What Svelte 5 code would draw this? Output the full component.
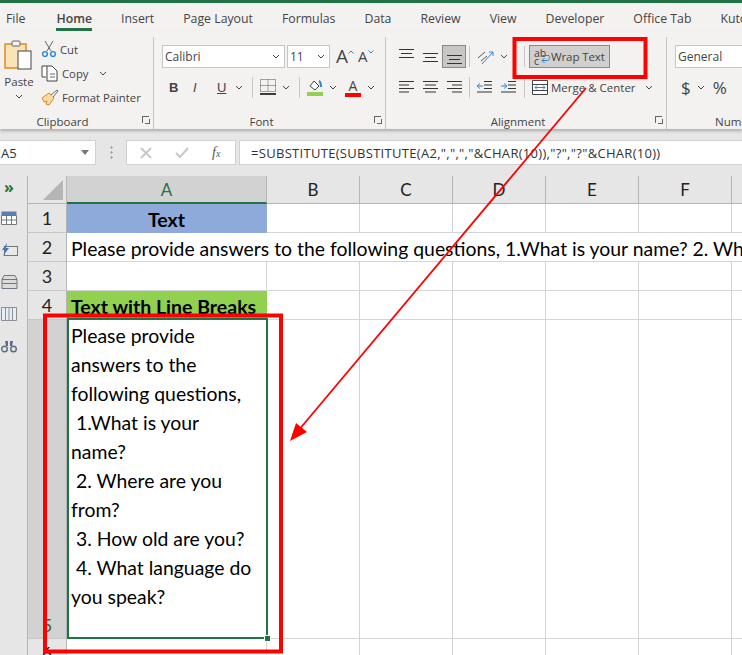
<script>
  const tabs = ['File', 'Home', 'Insert', 'Page Layout', 'Formulas', 'Data', 'Review', 'View', 'Developer', 'Office Tab', 'Kutools'];
  const columns = ['B', 'C', 'D', 'E', 'F', 'G'];
  const wrapped = [
    'Please provide', 'answers to the', 'following questions,', ' 1.What is your', 'name?',
    ' 2. Where are you', 'from?', ' 3. How old are you?', ' 4. What language do', 'you speak?'
  ];
</script>

<div class="excel">
  <div class="tabs">
    {#each tabs as tab}
      <span class="tab" class:current={tab === 'Home'}>{tab}</span>
    {/each}
  </div>

  <div class="ribbon">
    <section class="group clipboard">
      <div class="body clip-body">
        <div class="paste">
          <svg width="30" height="32" viewBox="0 0 30 32">
            <rect x="1" y="4" width="21" height="24" fill="#fbe3b8" stroke="#e08a1e" stroke-width="1.5"/>
            <rect x="8" y="1" width="8" height="5" rx="1" fill="#f3f2f1" stroke="#666"/>
            <rect x="14" y="11" width="13" height="18" fill="#fff" stroke="#444"/>
          </svg>
          <span>Paste</span>
          <svg class="chev" width="8" height="5" viewBox="0 0 8 5"><path d="M1 1l3 3 3-3" fill="none" stroke="#444"/></svg>
        </div>
        <div class="clip-list">
          <div class="clip-item">
            <svg width="16" height="18" viewBox="0 0 16 18"><path d="M4 1l6 10M12 1L6 11" fill="none" stroke="#666"/><circle cx="4" cy="14" r="2.4" fill="none" stroke="#2b88d8" stroke-width="1.4"/><circle cx="12" cy="14" r="2.4" fill="none" stroke="#2b88d8" stroke-width="1.4"/></svg>
            <span>Cut</span>
          </div>
          <div class="clip-item">
            <svg width="18" height="18" viewBox="0 0 18 18"><path d="M6 2H1v11h4M6 2h5l5 5v10H6z" fill="#fff" stroke="#444"/><path d="M9 10h5M9 13h5" stroke="#666"/></svg>
            <span>Copy</span>
            <svg class="copy-chev" width="8" height="5" viewBox="0 0 8 5"><path d="M1 1l3 3 3-3" fill="none" stroke="#444"/></svg>
          </div>
          <div class="clip-item">
            <svg width="18" height="18" viewBox="0 0 18 18"><path d="M1 10l7-5 5 5-5 7-3-1 1-3-3 1z" fill="#fbd9a5" stroke="#e08a1e"/><path d="M10 7l6-5 1 1-5 6" fill="#fff" stroke="#666"/></svg>
            <span>Format Painter</span>
          </div>
        </div>
      </div>
      <div class="label clip-label"><span>Clipboard</span><i class="launcher"></i></div>
    </section>

    <section class="group font">
      <div class="body font-body">
        <div class="row">
          <div class="combo font-name"><span>Calibri</span><svg width="8" height="5" viewBox="0 0 8 5"><path d="M1 1l3 3 3-3" fill="none" stroke="#444"/></svg></div>
          <div class="combo font-size"><span>11</span><svg width="8" height="5" viewBox="0 0 8 5"><path d="M1 1l3 3 3-3" fill="none" stroke="#444"/></svg></div>
          <span class="grow-a">A</span>
          <svg class="size-chev" width="6" height="4" viewBox="0 0 6 4"><path d="M.5 3.500L3 1l2.500 2.500" fill="none" stroke="#2b88d8"/></svg>
          <span class="shrink-a">A</span>
          <svg class="size-chev" width="6" height="4" viewBox="0 0 6 4"><path d="M.5.5L3 3 5.500.5" fill="none" stroke="#2b88d8"/></svg>
        </div>
        <div class="row format-row">
          <b class="fmt">B</b>
          <i class="fmt italic">I</i>
          <span class="fmt under">U</span>
          <svg class="chev-s" width="8" height="5" viewBox="0 0 8 5"><path d="M1 1l3 3 3-3" fill="none" stroke="#444"/></svg>
          <i class="vsep"></i>
          <svg width="16" height="16" viewBox="0 0 16 16"><path d="M.5.5h15v12H.5zM8 .5v12M.5 6.5h15" fill="none" stroke="#555" stroke-dasharray="1 1"/><path d="M0 15h16" stroke="#000" stroke-width="1.5"/></svg>
          <svg class="chev-s" width="8" height="5" viewBox="0 0 8 5"><path d="M1 1l3 3 3-3" fill="none" stroke="#444"/></svg>
          <i class="vsep"></i>
          <svg width="16" height="17" viewBox="0 0 16 17"><path d="M3 7l4-5 5 5-4 4z" fill="#fff" stroke="#444"/><path d="M12 2c2 1 2 3 2 6" fill="none" stroke="#2b88d8" stroke-width="2"/><rect y="13" width="16" height="4" fill="#92d050"/></svg>
          <svg class="chev-s" width="8" height="5" viewBox="0 0 8 5"><path d="M1 1l3 3 3-3" fill="none" stroke="#444"/></svg>
          <span class="font-colour">A</span>
          <svg class="chev-s" width="8" height="5" viewBox="0 0 8 5"><path d="M1 1l3 3 3-3" fill="none" stroke="#444"/></svg>
        </div>
      </div>
      <div class="label"><span>Font</span><i class="launcher"></i></div>
    </section>

    <section class="group alignment">
      <div class="body align-body">
        <div class="row align-row">
          <span class="al top"><svg width="15" height="10" viewBox="0 0 15 10"><path d="M0 1.500h15M2 5.500h11M0 9.500h15" stroke="#333"/></svg></span>
          <span class="al"><svg width="15" height="10" viewBox="0 0 15 10"><path d="M0 1.500h15M2 5.500h11M0 9.500h15" stroke="#333"/></svg></span>
          <span class="al bottom selected"><svg width="15" height="10" viewBox="0 0 15 10"><path d="M0 1.500h15M2 5.500h11M0 9.500h15" stroke="#333"/></svg></span>
          <i class="vsep first"></i>
          <svg class="orient" width="17" height="16" viewBox="0 0 17 16"><path d="M1 9l7-6M4 12l6-5" stroke="#555"/><path d="M5 15L16 3M12 3h4v4" fill="none" stroke="#2b88d8"/></svg>
          <svg class="chev-s" width="8" height="5" viewBox="0 0 8 5"><path d="M1 1l3 3 3-3" fill="none" stroke="#444"/></svg>
          <i class="vsep wide"></i>
          <div class="wrap-btn">
            <span class="abc">ab<br />c</span>
            <svg width="11" height="10" viewBox="0 0 11 10"><path d="M1 1.500h8c2 3 0 5-2 5H2M4.500 4L2 6.500 4.500 9" fill="none" stroke="#2b88d8"/></svg>
            <span class="wrap-text">Wrap Text</span>
          </div>
        </div>
        <div class="row align-row second">
          <span class="al"><svg width="15" height="12" viewBox="0 0 15 12"><path d="M0 .5h15M0 4h10M0 7.5h15M0 11h10" stroke="#333"/></svg></span>
          <span class="al"><svg width="15" height="12" viewBox="0 0 15 12"><path d="M0 .5h15M2 4h11M0 7.5h15M2 11h11" stroke="#333"/></svg></span>
          <span class="al"><svg width="15" height="12" viewBox="0 0 15 12"><path d="M0 .5h15M5 4h10M0 7.5h15M5 11h10" stroke="#333"/></svg></span>
          <i class="vsep first"></i>
          <span class="al"><svg width="15" height="12" viewBox="0 0 15 12"><path d="M7 .5h8M7 4h8M7 7.5h8M0 11h15" stroke="#333"/><path d="M6 5H0M3 2.500L0 5l3 2.500" fill="none" stroke="#2b88d8"/></svg></span>
          <span class="al"><svg width="15" height="12" viewBox="0 0 15 12"><path d="M7 .5h8M7 4h8M7 7.5h8M0 11h15" stroke="#333"/><path d="M0 5h6M3 2.500L6 5 3 7.500" fill="none" stroke="#2b88d8"/></svg></span>
          <i class="vsep wide2"></i>
          <div class="merge">
            <svg width="16" height="15" viewBox="0 0 16 15"><path d="M.5.5h15v14H.5zM.5 4.500h15M.5 10.500h15" fill="#fff" stroke="#444"/><path d="M3 7.500h10M5 5.500l-2 2 2 2M11 5.500l2 2-2 2" fill="none" stroke="#2b88d8"/></svg>
            <span>Merge &amp; Center</span>
            <svg width="8" height="5" viewBox="0 0 8 5"><path d="M1 1l3 3 3-3" fill="none" stroke="#444"/></svg>
          </div>
        </div>
      </div>
      <div class="label"><span>Alignment</span><i class="launcher"></i></div>
    </section>

    <section class="group number">
      <div class="body number-body">
        <div class="combo general"><span>General</span></div>
        <div class="row money">
          <span class="dollar">$</span>
          <svg class="chev-s" width="8" height="5" viewBox="0 0 8 5"><path d="M1 1l3 3 3-3" fill="none" stroke="#444"/></svg>
          <span class="pct">%</span>
        </div>
      </div>
      <div class="label num-label"><span>Number</span></div>
    </section>
  </div>

  <div class="formula-bar">
    <div class="name-box"><span>A5</span><i class="caret"></i></div>
    <span class="dots"></span>
    <div class="fx-box">
      <svg width="12" height="12" viewBox="0 0 12 12"><path d="M1 1l10 10M11 1L1 11" stroke="#c8c8c8" stroke-width="2"/></svg>
      <svg width="14" height="12" viewBox="0 0 14 12"><path d="M1 6l4 4 8-9" fill="none" stroke="#c8c8c8" stroke-width="2"/></svg>
      <em>f<small>x</small></em>
    </div>
    <div class="formula">=SUBSTITUTE(SUBSTITUTE(A2,",",","&amp;CHAR(10)),"?","?"&amp;CHAR(10))</div>
  </div>

  <div class="sheet">
    <aside class="side">
      <span class="expand">»</span>
      <svg width="16" height="14" viewBox="0 0 16 14"><rect x=".5" y=".5" width="15" height="4" fill="#5b7fb5"/><path d="M.5 4.500h15v9H.500zM5.500 4.500v9M10.500 4.500v9M.5 9h15" fill="#fff" stroke="#777"/></svg>
      <svg width="17" height="14" viewBox="0 0 17 14"><rect x="3.500" y="3.500" width="13" height="9" fill="#e8e8e8" stroke="#777"/><path d="M6 0L1 7h3l-2 6 6-8H5z" fill="#3b78c2"/></svg>
      <svg width="17" height="14" viewBox="0 0 17 14"><path d="M3 .5h11l2 4H1zM1 4.500h15v4H1zM1 8.500h15v5H1z" fill="#dcdcdc" stroke="#6f7782"/></svg>
      <svg width="16" height="14" viewBox="0 0 16 14"><path d="M.5.5h15v13H.500zM4.500.5v13M8 .5v13M11.500.5v13" fill="#e8eef5" stroke="#8a8f96"/></svg>
      <svg width="16" height="14" viewBox="0 0 16 14"><circle cx="3.500" cy="10" r="2.800" fill="none" stroke="#5a6b85" stroke-width="1.400"/><circle cx="12.500" cy="10" r="2.800" fill="none" stroke="#5a6b85" stroke-width="1.400"/><path d="M4 2h3v5H5zM12 2H9v5h2z" fill="#5a6b85"/></svg>
    </aside>

    <div class="grid">
      <div class="corner"><i></i></div>
      <div class="col-head current">A</div>
      {#each columns as col}
        <div class="col-head">{col}</div>
      {/each}

      <div class="row-head">1</div>
      <div class="cell title">Text</div>
      {#each columns as col}<div class="cell"></div>{/each}

      <div class="row-head">2</div>
      <div class="cell long">Please provide answers to the following questions, 1.What is your name? 2. Where are you from?</div>

      <div class="row-head">3</div>
      <div class="cell"></div>
      {#each columns as col}<div class="cell"></div>{/each}

      <div class="row-head">4</div>
      <div class="cell breaks">Text with Line Breaks</div>
      {#each columns as col}<div class="cell"></div>{/each}

      <div class="row-head current five">5</div>
      <div class="cell selected-cell">
        {#each wrapped as line}
          <div class="line">{line}</div>
        {/each}
        <i class="handle"></i>
      </div>
      {#each columns as col}<div class="cell"></div>{/each}

      <div class="row-head">6</div>
      <div class="cell"></div>
      {#each columns as col}<div class="cell"></div>{/each}
    </div>
  </div>

  <svg class="marks" width="742" height="655" viewBox="0 0 742 655">
    <rect x="514.500" y="39" width="131" height="38" fill="none" stroke="#fe0000" stroke-width="4"/>
    <rect x="45" y="315.500" width="236" height="336" fill="none" stroke="#fe0000" stroke-width="4"/>
    <path d="M586 88L298 431" stroke="#fe0000" stroke-width="1.800"/>
    <path d="M290 441l6-18 11 9z" fill="#fe0000"/>
  </svg>
</div>

<style>
  :global(body) {
    margin: 0;
    background: #e6e6e6;
  }

  .excel {
    position: relative;
    width: 742px;
    height: 655px;
    overflow: hidden;
    font-family: "Open Sans", "Noto Sans", sans-serif;
    color: #444;
    background: #e6e6e6;
  }

  /* tabs */
  .tabs {
    display: flex;
    height: 28px;
    gap: 29px;
    padding-left: 6px;
    border-top: 3px solid #217346;
    background: #f3f2f1;
    font-size: 12.300px;
    line-height: 31px;
    white-space: nowrap;
  }

  .tab {
    height: 28px;
    color: #444;
  }

  .tab:first-child {
    margin-right: 2px;
  }

  .tab.current {
    font-weight: 600;
    box-shadow: inset 0 -3px #217346;
  }

  /* ribbon */
  .ribbon {
    display: flex;
    height: 98px;
    background: #f3f2f1;
    box-shadow: 0 2px 3px rgba(0, 0, 0, 0.25);
    position: relative;
    font-size: 12px;
    white-space: nowrap;
  }

  .group {
    display: flex;
    flex-direction: column;
    flex: none;
    border-right: 1px solid #c8c6c4;
    margin: 6px 0 0;
  }

  .body {
    flex: 1;
  }

  .label {
    display: flex;
    justify-content: center;
    position: relative;
    height: 20px;
    padding-right: 16px;
    line-height: 25px;
    font-size: 11.500px;
  }

  .clip-label {
    padding-right: 28px;
  }

  .launcher {
    position: absolute;
    right: 4px;
    top: 7px;
    width: 6px;
    height: 6px;
    border-left: 1px solid #666;
    border-top: 1px solid #666;
    box-shadow: 2px 2px 0 -1px #666;
  }

  .row {
    display: flex;
    align-items: center;
  }

  .clipboard {
    width: 153px;
  }

  .clip-body {
    display: flex;
    padding: 3px 0 0 5px;
  }

  .paste {
    display: flex;
    flex-direction: column;
    align-items: center;
    width: 28px;
    font-size: 11.500px;
  }

  .paste span {
    margin-top: 1px;
    line-height: 17px;
  }

  .chev {
    margin-top: 4px;
  }

  .clip-list {
    margin-left: 8px;
    display: flex;
    flex-direction: column;
    gap: 6px;
    font-size: 11.300px;
  }

  .clip-item {
    display: flex;
    align-items: center;
    gap: 3px;
    height: 18px;
  }

  .copy-chev {
    margin-left: 8px;
  }

  .font {
    width: 231px;
  }

  .font-body {
    padding: 8px 0 0 8px;
  }

  .combo {
    display: flex;
    align-items: center;
    justify-content: space-between;
    box-sizing: border-box;
    height: 23px;
    padding: 0 4px 0 2px;
    background: #fff;
    border: 1px solid #c8c6c4;
  }

  .font-name {
    width: 123px;
  }

  .font-size {
    width: 43px;
    margin-left: 2px;
  }

  .grow-a, .shrink-a {
    color: #444;
    line-height: 1;
    margin-left: 6px;
  }

  .grow-a {
    font-size: 19px;
  }

  .shrink-a {
    font-size: 15px;
    margin-left: 4px;
  }

  .size-chev {
    align-self: flex-start;
    margin-top: 5px;
    flex: none;
  }

  .format-row {
    margin-top: 7px;
    padding-left: 7px;
    height: 24px;
  }

  .fmt {
    width: 24px;
    font-size: 13px;
    font-family: "Liberation Sans", sans-serif;
  }

  .under {
    text-decoration: underline;
    width: 12px;
  }

  .chev-s {
    margin-left: 6px;
    flex: none;
  }

  .vsep {
    display: block;
    width: 1px;
    height: 21px;
    margin: 0 7px 0 9px;
    background: #c8c6c4;
    flex: none;
  }

  .vsep.first {
    margin: 0 2px 0 3px;
  }

  .font-colour {
    font-size: 14px;
    width: 16px;
    margin-left: 8px;
    text-align: center;
    line-height: 15px;
    border-bottom: 4px solid #f00;
  }

  .alignment {
    width: 280px;
  }

  .align-body {
    padding: 8px 0 0 8px;
  }

  .align-row {
    height: 23px;
  }

  .align-row.second {
    margin-top: 7px;
    height: 24px;
  }

  .al {
    display: flex;
    align-items: center;
    justify-content: center;
    box-sizing: border-box;
    width: 24px;
    height: 23px;
    flex: none;
  }

  .al.top svg {
    margin-bottom: 7px;
  }

  .al.bottom svg {
    margin-top: 5px;
  }

  .al.selected {
    background: #c8c6c4;
    border: 1px solid #8a8886;
  }

  .orient {
    margin-left: 5px;
    flex: none;
  }

  .vsep.wide {
    margin: 0 4px 0 16px;
  }

  .vsep.wide2 {
    margin: 0 7px 0 4px;
  }

  .wrap-btn {
    display: flex;
    align-items: center;
    box-sizing: border-box;
    width: 81px;
    height: 23px;
    padding-left: 4px;
    background: #d2d0ce;
    border: 1px solid #8a8886;
    font-size: 11.500px;
  }

  .abc {
    font-size: 10.500px;
    line-height: 8px;
    width: 13px;
  }

  .wrap-btn svg {
    margin: 4px 0 0 -7px;
  }

  .wrap-text {
    letter-spacing: -0.100px;
  }

  .merge {
    display: flex;
    align-items: center;
    gap: 3px;
    font-size: 11.500px;
  }

  .merge svg:last-child {
    margin-left: 6px;
  }

  .number {
    flex: 1;
    border-right: 0;
  }

  .number-body {
    padding: 8px 0 0 8px;
  }

  .general {
    width: 100px;
  }

  .money {
    margin-top: 7px;
    height: 24px;
    padding-left: 6px;
    gap: 0;
  }

  .dollar, .pct {
    font-size: 17px;
    font-family: "Open Sans", sans-serif;
  }

  .pct {
    margin-left: 8px;
  }

  .num-label {
    justify-content: flex-start;
    padding-left: 48px;
  }

  /* formula bar */
  .formula-bar {
    display: flex;
    align-items: stretch;
    height: 25px;
    padding: 11px 0 11px;
    font-size: 13px;
  }

  .name-box, .fx-box, .formula {
    box-sizing: border-box;
    background: #fff;
    border: 1px solid #d0d0d0;
    display: flex;
    align-items: center;
  }

  .name-box {
    width: 96px;
    justify-content: space-between;
    padding: 0 6px 0 1px;
    color: #333;
    border-left: 0;
  }

  .caret {
    border: 4px solid transparent;
    border-top: 5px solid #777;
    border-bottom: 0;
  }

  .dots {
    width: 30px;
    background: radial-gradient(circle, #aaa 1px, transparent 1.300px) center / 3px 5px repeat-y;
    margin: 4px 0;
  }

  .fx-box {
    width: 110px;
    gap: 23px;
    padding-left: 13px;
  }

  .fx-box em {
    font-family: "Liberation Serif", serif;
    font-size: 14px;
    color: #555;
  }

  .fx-box small {
    font-size: 10px;
  }

  .formula {
    flex: 1;
    margin-left: 3px;
    padding-left: 11px;
    border-right: 0;
    color: #333;
    white-space: nowrap;
    letter-spacing: 0.300px;
  }

  /* sheet */
  .sheet {
    display: flex;
    height: 479px;
  }

  .side {
    box-sizing: border-box;
    width: 28px;
    flex: none;
    display: flex;
    flex-direction: column;
    align-items: center;
    gap: 18px;
    padding: 4px 9px 0 0;
    border-right: 1px solid #b5b5b5;
  }

  .expand {
    color: #217346;
    font-size: 16px;
    font-weight: 700;
    line-height: 14px;
    height: 14px;
    margin-bottom: -1px;
  }

  .grid {
    display: grid;
    grid-template-columns: 39px 200px repeat(5, 93px) 50px;
    grid-template-rows: 28px 29px 29px 29px 29px 319px 29px;
    flex: none;
    background: #fff;
    font-family: Lato, "Open Sans", sans-serif;
    color: #000;
  }

  .corner {
    background: #e6e6e6;
    border-right: 1px solid #b5b5b5;
    border-bottom: 1px solid #b5b5b5;
    position: relative;
  }

  .corner i {
    position: absolute;
    right: 3px;
    bottom: 3px;
    width: 0;
    height: 0;
    border-left: 20px solid transparent;
    border-bottom: 20px solid #b5b5b5;
  }

  .col-head {
    display: flex;
    align-items: center;
    justify-content: center;
    box-sizing: border-box;
    background: #e6e6e6;
    border-right: 1px solid #b5b5b5;
    border-bottom: 1px solid #b5b5b5;
    font-size: 17px;
    color: #222;
  }

  .col-head.current {
    background: #d2d2d2;
    color: #217346;
    border-bottom: 2px solid #217346;
  }

  .row-head {
    display: flex;
    align-items: center;
    justify-content: center;
    box-sizing: border-box;
    background: #e6e6e6;
    border-right: 1px solid #b5b5b5;
    border-bottom: 1px solid #c8c8c8;
    font-size: 18px;
    color: #222;
  }

  .row-head.current {
    background: #d2d2d2;
    color: #217346;
  }

  .five {
    align-items: flex-end;
    padding-bottom: 2px;
  }

  .cell {
    box-sizing: border-box;
    border-right: 1px solid #d4d4d4;
    border-bottom: 1px solid #d4d4d4;
    font-size: 19.400px;
    line-height: 31px;
    padding-left: 4px;
    white-space: nowrap;
  }

  .title {
    background: #8eaadb;
    border-color: #8eaadb;
    font-weight: 700;
    font-size: 19.500px;
    text-align: center;
    padding: 0;
  }

  .long {
    grid-column: 2 / -1;
    overflow: hidden;
    border-right: 0;
  }

  .breaks {
    background: #92d050;
    border-color: #92d050;
    font-weight: 700;
    font-size: 19.500px;
  }

  .selected-cell {
    position: relative;
    z-index: 1;
    margin: -2px -1px 0 0;
    padding: 1px 0 0 2px;
    border: 2px solid #217346;
  }

  .line {
    white-space: pre;
    height: 29px;
    line-height: 29px;
  }

  .handle {
    position: absolute;
    right: -5px;
    bottom: -5px;
    width: 7px;
    height: 7px;
    background: #217346;
    border: 1px solid #fff;
    box-sizing: border-box;
  }

  .marks {
    position: absolute;
    inset: 0;
    z-index: 2;
    pointer-events: none;
  }
</style>
